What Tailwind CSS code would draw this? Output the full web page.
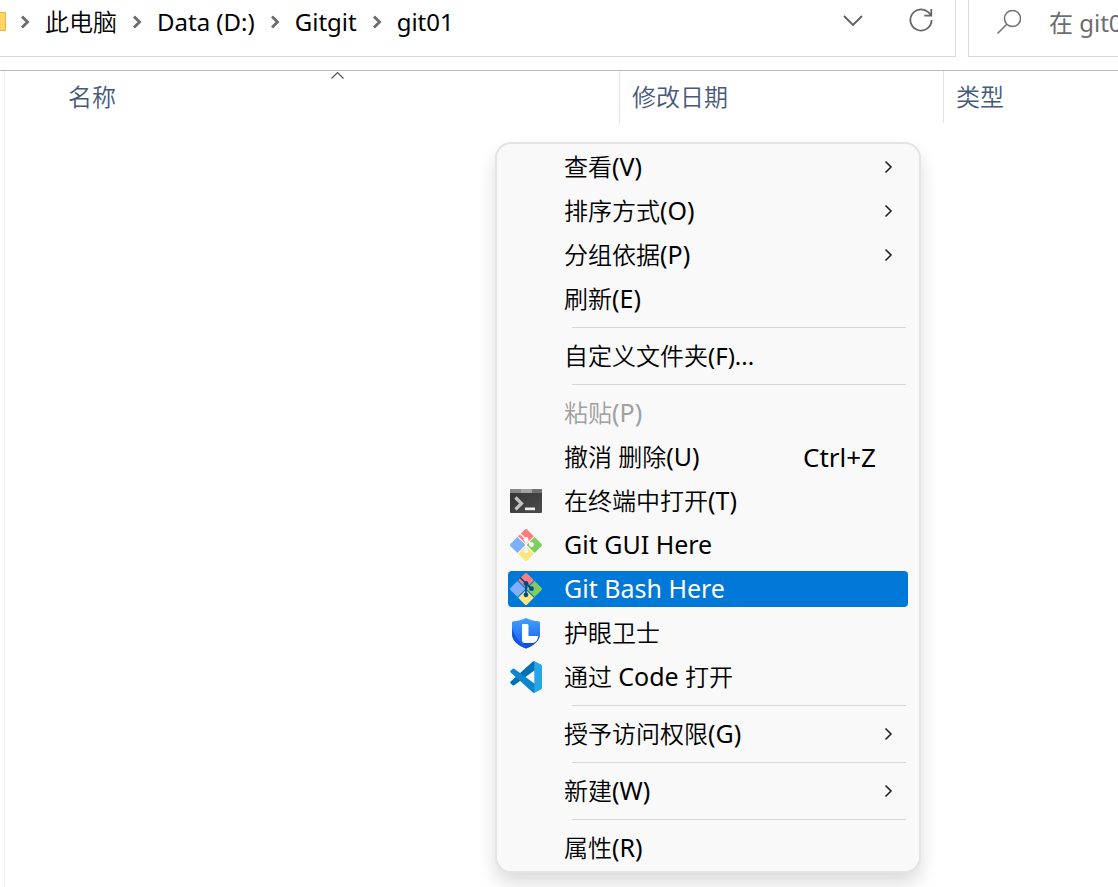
<!DOCTYPE html>
<html lang="zh-CN">
<head>
<meta charset="utf-8">
<title>git01</title>
<script src="https://cdn.jsdelivr.net/npm/@tailwindcss/browser@4"></script>
</head>
<body class="relative flex h-screen flex-col overflow-hidden bg-white font-['Noto_Sans','Noto_Sans_CJK_SC',sans-serif] text-2xl font-[350] text-black">
<svg class="hidden">
  <defs>
    <symbol id="crumb" viewBox="0 0 10 14"><path d="M2 1.500L7.500 7 2 12.500" fill="none" stroke="#6b6b6b" stroke-width="2.800"/></symbol>
    <symbol id="sub" viewBox="0 0 10 14"><path d="M2.500 1.500L8 7l-5.500 5.500" fill="none" stroke="#222" stroke-width="1.600"/></symbol>
    <symbol id="git" viewBox="0 0 32 32">
      <path d="M14.800 0.600a1.700 1.700 0 0 1 2.400 0L23.800 7.200 16 15 8.200 7.200z" fill="#ff7d7d"/>
      <path d="M7.400 8L15.400 16l-8 8L0.600 17.200a1.700 1.700 0 0 1 0-2.400z" fill="#7eb0ff"/>
      <path d="M24.600 8l6.800 6.800a1.700 1.700 0 0 1 0 2.400l-6.800 6.800-8-8z" fill="#80cf5e"/>
      <path d="M8.200 24.800L16 17l7.800 7.800-6.600 6.600a1.700 1.700 0 0 1-2.400 0z" fill="#ffe57f"/>
      <path d="M10 4.500l6 6V22M16 10.500l5.500 5" fill="none" stroke="currentColor" stroke-width="1.700"/>
      <circle cx="16" cy="10.500" r="2.400" fill="currentColor"/><circle cx="21.500" cy="15.700" r="2.400" fill="currentColor"/><circle cx="16" cy="21.800" r="2.400" fill="currentColor"/>
    </symbol>
  </defs>
</svg>

<header class="flex h-[57px] shrink-0 gap-3">
  <nav aria-label="地址栏" class="flex min-w-0 flex-1 items-start border-r border-b border-[#d9d9d9]">
    <div class="mt-3 h-[19px] w-1.5 border-y border-r border-[#efb63c] bg-[#ffd566]"></div>
    <ol class="flex h-11 items-center gap-[15px]">
      <li class="flex items-center gap-[15px] pl-3.5"><svg class="h-3.5 w-2.5"><use href="#crumb"/></svg><a href="#">此电脑</a></li>
      <li class="flex items-center gap-[15px] font-normal"><svg class="h-3.5 w-2.5"><use href="#crumb"/></svg><a href="#">Data (D:)</a></li>
      <li class="flex items-center gap-[15px] font-normal"><svg class="h-3.5 w-2.5"><use href="#crumb"/></svg><a href="#">Gitgit</a></li>
      <li class="flex items-center gap-[15px] font-normal"><svg class="h-3.5 w-2.5"><use href="#crumb"/></svg><a href="#">git01</a></li>
    </ol>
    <div class="mr-[22px] ml-auto flex h-10 items-center gap-11">
      <button aria-label="历史记录"><svg class="block h-6 w-6" viewBox="0 0 24 24" fill="none" stroke="#5f5f5f" stroke-width="1.800"><path d="M3 8l9 9 9-9"/></svg></button>
      <button aria-label="刷新"><svg class="block h-6 w-6" viewBox="0 0 24 24" fill="none" stroke="#666" stroke-width="1.800"><path d="M22.600 12a10.600 10.600 0 1 1-3.400-7.800L22 7M22.300 1v6.600h-7"/></svg></button>
    </div>
  </nav>
  <form class="flex w-[150px] items-start border-b border-l border-[#d9d9d9]">
    <label for="search" class="ml-7 flex h-11 items-center"><svg class="h-6 w-6" viewBox="0 0 24 24" fill="none" stroke="#707070" stroke-width="1.500"><circle cx="15.500" cy="8.500" r="8"/><path d="M9.800 14.200L0.500 23.500"/></svg></label>
    <input id="search" aria-label="搜索" placeholder="在 git01 中搜索" class="ml-7 h-11 w-0 flex-1 font-normal outline-none placeholder:text-[#6d6d6d]">
  </form>
</header>

<main class="mt-[13px] flex-1 border-t border-[#b9b9b9] pl-1">
  <div class="h-full border-l border-[#f0f0f0]">
    <div class="relative flex h-[52px] text-[#46597a]">
      <button class="flex w-[615px] items-center border-r border-[#e5e5e5] pl-[63px]">名称</button>
      <button class="flex w-[324px] items-center border-r border-[#e5e5e5] pl-3">修改日期</button>
      <button class="flex flex-1 items-center pl-3">类型</button>
      <svg class="absolute top-0 left-[325px] h-2 w-4" viewBox="0 0 16 8" fill="none" stroke="#555" stroke-width="1.200"><path d="M1.500 7.500l6-6 6 6"/></svg>
    </div>
  </div>
</main>

<div role="menu" class="absolute top-[142px] left-[495px] w-[426px] rounded-2xl border-2 border-[#e4e4e4] bg-[#f9f9f9] px-[11px] py-px shadow-[0_10px_18px_rgba(0,0,0,0.14)]">
  <div class="flex flex-col gap-2 py-1">
    <button role="menuitem" class="flex h-9 items-center pl-14"><span>查看<span class="text-[25px] font-normal">(V)</span></span><svg class="mr-[15px] ml-auto h-3.5 w-2.5"><use href="#sub"/></svg></button>
    <button role="menuitem" class="flex h-9 items-center pl-14"><span>排序方式<span class="text-[25px] font-normal">(O)</span></span><svg class="mr-[15px] ml-auto h-3.5 w-2.5"><use href="#sub"/></svg></button>
    <button role="menuitem" class="flex h-9 items-center pl-14"><span>分组依据<span class="text-[25px] font-normal">(P)</span></span><svg class="mr-[15px] ml-auto h-3.5 w-2.5"><use href="#sub"/></svg></button>
    <button role="menuitem" class="flex h-9 items-center pl-14"><span>刷新<span class="text-[25px] font-normal">(E)</span></span></button>
  </div>
  <hr class="my-1.5 mr-0.5 ml-16 border-[#d7d7d7]">
  <div class="flex flex-col py-1">
    <button role="menuitem" class="flex h-9 items-center pl-14"><span>自定义文件夹<span class="font-normal">(F)...</span></span></button>
  </div>
  <hr class="my-1.5 mr-0.5 ml-16 border-[#d7d7d7]">
  <div class="flex flex-col gap-2 py-1">
    <button role="menuitem" disabled class="flex h-9 items-center pl-14 text-[#a0a0a0]"><span>粘贴<span class="text-[25px] font-normal">(P)</span></span></button>
    <button role="menuitem" class="flex h-9 items-center pl-14"><span>撤消 删除<span class="text-[25px] font-normal">(U)</span></span><span class="mr-8 ml-auto text-[26px] font-normal">Ctrl+Z</span></button>
    <button role="menuitem" class="flex h-9 items-center gap-[22px] pl-0.5">
      <svg class="h-8 w-8" viewBox="0 0 32 32"><defs><linearGradient id="term" x1="0" y1="0" x2="1" y2="1"><stop offset="0" stop-color="#333"/><stop offset="1" stop-color="#4c4c4c"/></linearGradient></defs><rect y="4" width="32" height="24" rx="1" fill="url(#term)"/><path d="M0 5a1 1 0 0 1 1-1h10v4H0z" fill="#888"/><path d="M11 4h11v4H11z" fill="#a2a2a2"/><path d="M22 4h9a1 1 0 0 1 1 1v3H22z" fill="#707070"/><path d="M5.500 12.500l6 6-6 6" fill="none" stroke="#c4c4c4" stroke-width="3.200"/><path d="M15 22.500h10v2.700H15z" fill="#ededed"/></svg>
      <span>在终端中打开<span class="text-[25px] font-normal">(T)</span></span></button>
    <button role="menuitem" class="flex h-9 items-center gap-[22px] pl-0.5 text-[25px] font-normal"><svg class="h-8 w-8 text-[#f9f9f9]"><use href="#git"/></svg>Git GUI Here</button>
    <button role="menuitem" class="flex h-9 items-center gap-[22px] rounded-sm bg-[#0078d7] pl-0.5 text-[25px] font-normal text-white"><svg class="h-8 w-8 text-[#004a91]"><use href="#git"/></svg>Git Bash Here</button>
    <button role="menuitem" class="flex h-9 items-center gap-[22px] pl-0.5">
      <svg class="h-8 w-8" viewBox="0 0 32 32"><defs><linearGradient id="shield" x1="0" y1="0" x2="0" y2="1"><stop offset="0" stop-color="#41a0fb"/><stop offset="1" stop-color="#1557ed"/></linearGradient></defs><path d="M16 1c4 2 8 3 12.500 3.200a1.500 1.500 0 0 1 1.500 1.500V17c0 6.500-6 11.500-14 14.500C8 28.500 2 23.500 2 17V5.700a1.500 1.500 0 0 1 1.500-1.500C8 4 12 3 16 1z" fill="url(#shield)"/><path d="M2 11c2 6 5 12 14 20.500C8 28.500 2 23.500 2 17z" fill="#1155dc"/><path d="M13 26L25 26 30 18c-1 6-7 11-14 13.500z" fill="#1450dd"/><path d="M12 7h5a1.500 1.500 0 0 1 1.500 1.500V19H28c0 4-2.500 7-6 7h-7a3 3 0 0 1-3-3z" fill="#fff"/></svg>
      护眼卫士</button>
    <button role="menuitem" class="flex h-9 items-center gap-[22px] pl-0.5">
      <svg class="h-8 w-8" viewBox="0 0 32 32"><path d="M31 4L24.600 0.500a2 2 0 0 0-2.300.4L0.700 20.600a1.300 1.300 0 0 0 0 1.900l1.800 1.600a1.300 1.300 0 0 0 1.700.1L30.500 5z" fill="#0071b5"/><path d="M31 28l-6.400 3.500a2 2 0 0 1-2.300-.4L0.700 11.400a1.300 1.300 0 0 1 0-1.900l1.800-1.600a1.300 1.300 0 0 1 1.700-.1L30.500 27z" fill="#0c86cc"/><path d="M24.600 31.600a2 2 0 0 1-2.300-.4c.7.700 2 .2 2-.9V1.700c0-1.100-1.300-1.600-2-.9a2 2 0 0 1 2.300-.4L31 3.500a2 2 0 0 1 1 1.700v21.600a2 2 0 0 1-1 1.700z" fill="#27a5ea"/></svg>
      <span>通过 <span class="text-[25px] font-normal">Code</span> 打开</span></button>
  </div>
  <hr class="my-1.5 mr-0.5 ml-16 border-[#d7d7d7]">
  <div class="flex flex-col py-1">
    <button role="menuitem" class="flex h-9 items-center pl-14"><span>授予访问权限<span class="text-[25px] font-normal">(G)</span></span><svg class="mr-[15px] ml-auto h-3.5 w-2.5"><use href="#sub"/></svg></button>
  </div>
  <hr class="my-1.5 mr-0.5 ml-16 border-[#d7d7d7]">
  <div class="flex flex-col py-1">
    <button role="menuitem" class="flex h-9 items-center pl-14"><span>新建<span class="text-[25px] font-normal">(W)</span></span><svg class="mr-[15px] ml-auto h-3.5 w-2.5"><use href="#sub"/></svg></button>
  </div>
  <hr class="my-1.5 mr-0.5 ml-16 border-[#d7d7d7]">
  <div class="flex flex-col py-1">
    <button role="menuitem" class="flex h-9 items-center pl-14"><span>属性<span class="text-[25px] font-normal">(R)</span></span></button>
  </div>
</div>
</body>
</html>
